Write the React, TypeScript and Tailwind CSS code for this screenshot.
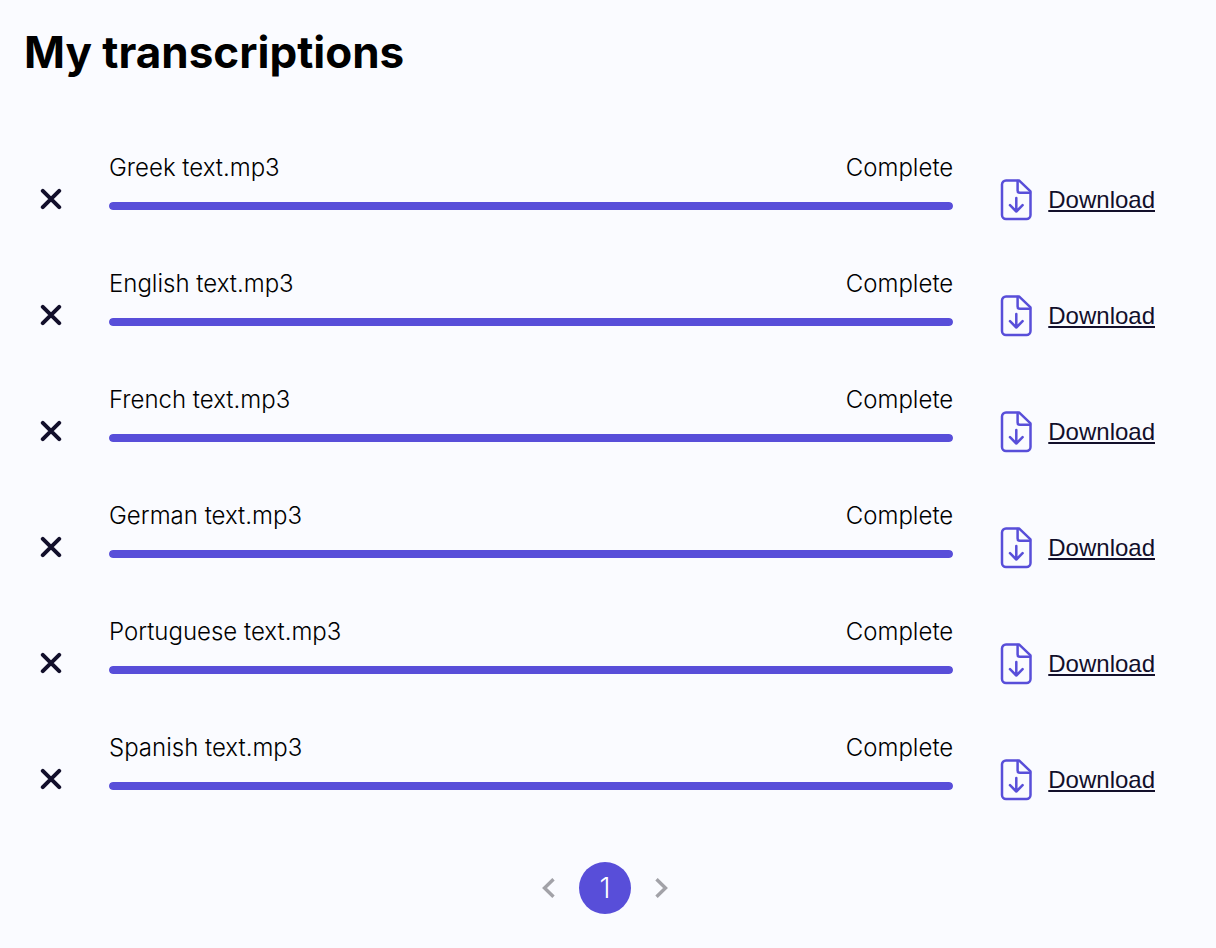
import React from 'react';

interface Transcription {
  id: number;
  fileName: string;
  status: string;
  progress: number;
}

const transcriptions: Transcription[] = [
  { id: 1, fileName: 'Greek text.mp3', status: 'Complete', progress: 100 },
  { id: 2, fileName: 'English text.mp3', status: 'Complete', progress: 100 },
  { id: 3, fileName: 'French text.mp3', status: 'Complete', progress: 100 },
  { id: 4, fileName: 'German text.mp3', status: 'Complete', progress: 100 },
  { id: 5, fileName: 'Portuguese text.mp3', status: 'Complete', progress: 100 },
  { id: 6, fileName: 'Spanish text.mp3', status: 'Complete', progress: 100 },
];

const CloseIcon = () => (
  <svg width="22" height="22" viewBox="0 0 22 22" fill="none" stroke="currentColor" strokeWidth="4" strokeLinecap="round">
    <path d="M2.8 2.8L19.2 19.2M19.2 2.8L2.8 19.2" />
  </svg>
);

const FileDownloadIcon = () => (
  <svg
    className="shrink-0"
    width="32"
    height="42"
    viewBox="0 0 32 42"
    fill="none"
    stroke="#584ED9"
    strokeWidth="2.5"
    strokeLinecap="round"
    strokeLinejoin="round"
  >
    <path d="M6 1.4H19L30.5 12.4V36A4 4 0 0 1 26.5 40H6A4 4 0 0 1 2 36V5.4A4 4 0 0 1 6 1.4Z" />
    <path d="M17.6 2V11.5A2.3 2.3 0 0 0 19.9 13.8H30" />
    <path d="M16.3 19V32.5M10 26.2L16.3 32.5L22.6 26.2" />
  </svg>
);

// Single transcription with its progress bar and download link
const TranscriptionRow: React.FC<{ item: Transcription }> = ({ item }) => (
  <li className="flex items-end">
    <button type="button" aria-label={`Remove ${item.fileName}`} className="flex h-11 w-[22px] items-center justify-center text-[#120F2B]">
      <CloseIcon />
    </button>
    <div className="ml-[47px] min-w-0 flex-1 pb-[11px]">
      <div className="flex justify-between gap-4 text-2xl font-[350] text-black">
        <span>{item.fileName}</span>
        <span>{item.status}</span>
      </div>
      <div
        role="progressbar"
        aria-label={item.fileName}
        aria-valuenow={item.progress}
        className="mt-[18px] h-2 overflow-hidden rounded-full bg-[#E4E2F9]"
      >
        <div className="h-full rounded-full bg-[#584ED9]" style={{ width: `${item.progress}%` }} />
      </div>
    </div>
    <a
      href="#download"
      className="ml-[47px] flex items-center gap-4 font-['Liberation_Sans',Arial,sans-serif] text-2xl text-[#120F2B] underline"
    >
      <FileDownloadIcon />
      Download
    </a>
  </li>
);

const Pagination = () => (
  <nav aria-label="Pagination" className="mt-[61px] mr-[6px] flex items-center justify-center gap-6">
    <button type="button" aria-label="Previous page" className="text-[#A2A2A8]">
      <svg width="14" height="20" viewBox="0 0 14 20" fill="none" stroke="currentColor" strokeWidth="3.4">
        <path d="M12.5 1.2L3.5 10L12.5 18.8" />
      </svg>
    </button>
    <button
      type="button"
      aria-current="page"
      className="flex size-[52px] items-center justify-center rounded-full bg-[#584ED9] text-[28px] font-[350] text-white"
    >
      1
    </button>
    <button type="button" aria-label="Next page" className="text-[#A2A2A8]">
      <svg width="14" height="20" viewBox="0 0 14 20" fill="none" stroke="currentColor" strokeWidth="3.4">
        <path d="M1.5 1.2L10.5 10L1.5 18.8" />
      </svg>
    </button>
  </nav>
);

const App: React.FC = () => {
  return (
    <main className="min-h-screen bg-[#FAFBFF] px-6 pt-6 pb-8 font-['Inter',sans-serif]">
      <h1 className="text-[44px] leading-[56px] font-bold text-black">My transcriptions</h1>

      <ul className="mt-[72px] mr-[37px] ml-4 flex flex-col gap-[47px]">
        {transcriptions.map((item) => (
          <TranscriptionRow key={item.id} item={item} />
        ))}
      </ul>

      <Pagination />
    </main>
  );
};

export default App;
